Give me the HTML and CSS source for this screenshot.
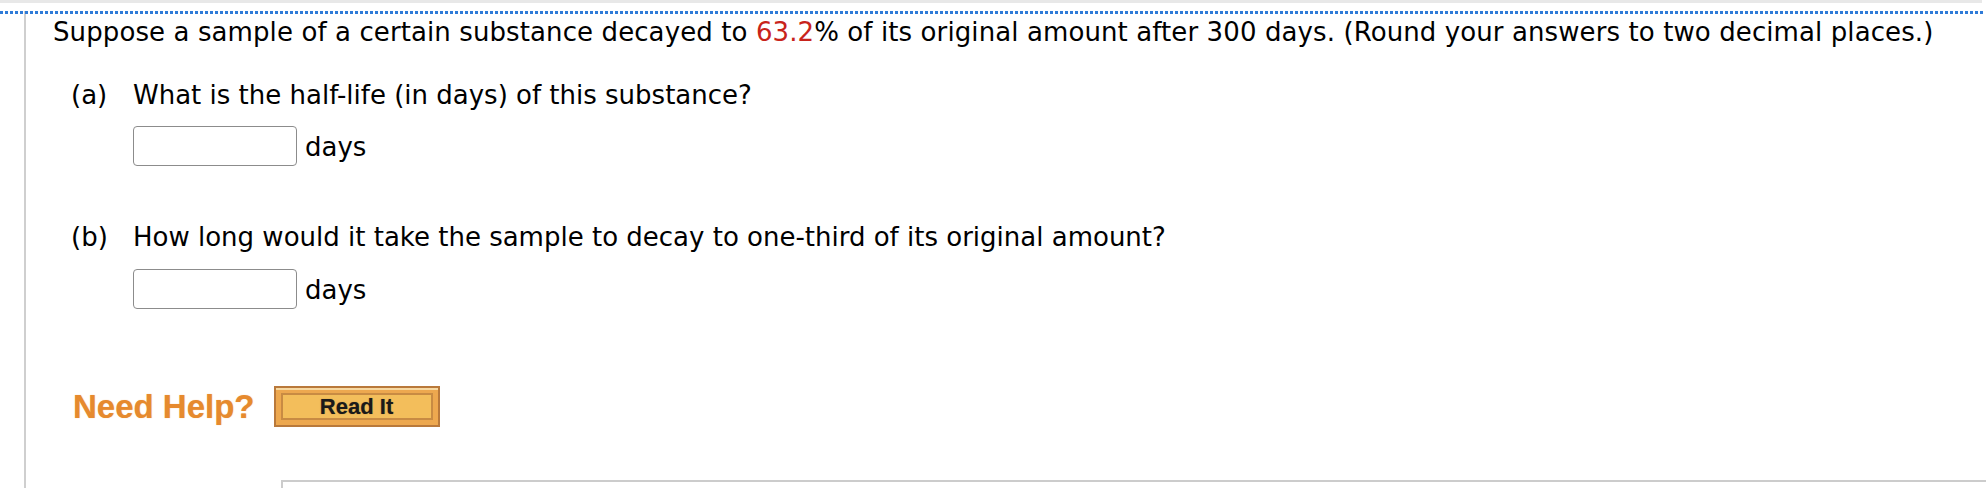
FILE: index.html
```html
<!DOCTYPE html>
<html lang="en">
<head>
    <meta charset="UTF-8">
    <meta name="viewport" content="width=device-width, initial-scale=1.0">
    <title>Decay Question</title>
    <link rel="stylesheet" href="styles.css">
</head>
<body>
    <div class="top-rule"></div>
    <div class="frame">
        <div class="dots"></div>
        <div class="question">
            <p class="intro">Suppose a sample of a certain substance decayed to <span class="value">63.2</span>% of its original amount after 300 days. (Round your answers to two decimal places.)</p>

            <div class="part">
                <span class="part-label">(a)</span>
                <div class="part-body">
                    <p class="prompt">What is the half-life (in days) of this substance?</p>
                    <div class="answer-row">
                        <input type="text" class="answer">
                        <span class="unit">days</span>
                    </div>
                </div>
            </div>

            <div class="part part-b">
                <span class="part-label">(b)</span>
                <div class="part-body">
                    <p class="prompt">How long would it take the sample to decay to one-third of its original amount?</p>
                    <div class="answer-row">
                        <input type="text" class="answer">
                        <span class="unit">days</span>
                    </div>
                </div>
            </div>

            <div class="help">
                <span class="help-title">Need Help?</span>
                <button class="read-it"><span>Read It</span></button>
            </div>
        </div>
        <div class="next-box"></div>
    </div>
</body>
</html>
```

FILE: styles.css
```css
html, body {
    margin: 0;
    height: 488px;
    overflow: hidden;
}
body {
    font-family: Verdana, "DejaVu Sans", sans-serif;
    font-size: 26px;
    line-height: 30px;
    color: #000;
    background: #fff;
}
p {
    margin: 0;
}
.top-rule {
    width: 1982px;
    height: 3px;
    background: #e8e8e8;
}
.frame {
    margin-left: 24px;
    margin-top: 1px;
    border-left: 2px solid #cfcfcf;
    height: 484px;
}
.dots {
    margin-left: -26px;
    margin-top: 8px;
    width: 1984px;
    height: 3px;
    background: repeating-linear-gradient(90deg, #2f7bd8 0 3px, transparent 3px 5px);
}
.question {
    padding-left: 27px;
    padding-top: 3px;
}
.value {
    color: #c8231b;
}
.intro {
    letter-spacing: 0.1px;
    margin-bottom: 31px;
}
.part {
    display: flex;
    padding-left: 18px;
    padding-top: 2px;
}
.part-label {
    width: 62px;
}
.part-b {
    margin-top: 54px;
}
.answer-row {
    display: flex;
    align-items: center;
    gap: 8px;
    margin-top: 16px;
}
.part-b .answer-row {
    margin-top: 17px;
}
.answer {
    box-sizing: border-box;
    width: 164px;
    height: 40px;
    border: 1.5px solid #8c8c8c;
    border-radius: 4px;
    padding: 0 8px;
    font: inherit;
}
.unit {
    padding-top: 2px;
}
.help {
    display: flex;
    align-items: center;
    gap: 19px;
    margin-top: 77px;
    padding-left: 20px;
}
.help-title {
    font-family: "Liberation Sans", Arial, sans-serif;
    font-weight: bold;
    font-size: 33px;
    color: #e68a2e;
    text-shadow: 0 0 1px rgba(230, 138, 46, 0.6);
}
.read-it {
    box-sizing: border-box;
    width: 166px;
    height: 41px;
    padding: 5px;
    border: 2px solid #b9793b;
    background: #eda84f;
    box-shadow: inset 0 2px 0 #f7d9a2;
    cursor: pointer;
}
.read-it span {
    display: block;
    height: 100%;
    box-sizing: border-box;
    border: 2px solid #c88b43;
    background: #f3be5b;
    font-family: "Liberation Sans", Arial, sans-serif;
    font-weight: bold;
    font-size: 22px;
    line-height: 24px;
    color: #1a1a1a;
    text-shadow: 0 0 1px rgba(0, 0, 0, 0.4);
}
.next-box {
    margin-top: 53px;
    margin-left: 255px;
    height: 6px;
    border-top: 2px solid #cccccc;
    border-left: 2px solid #cccccc;
}
```
